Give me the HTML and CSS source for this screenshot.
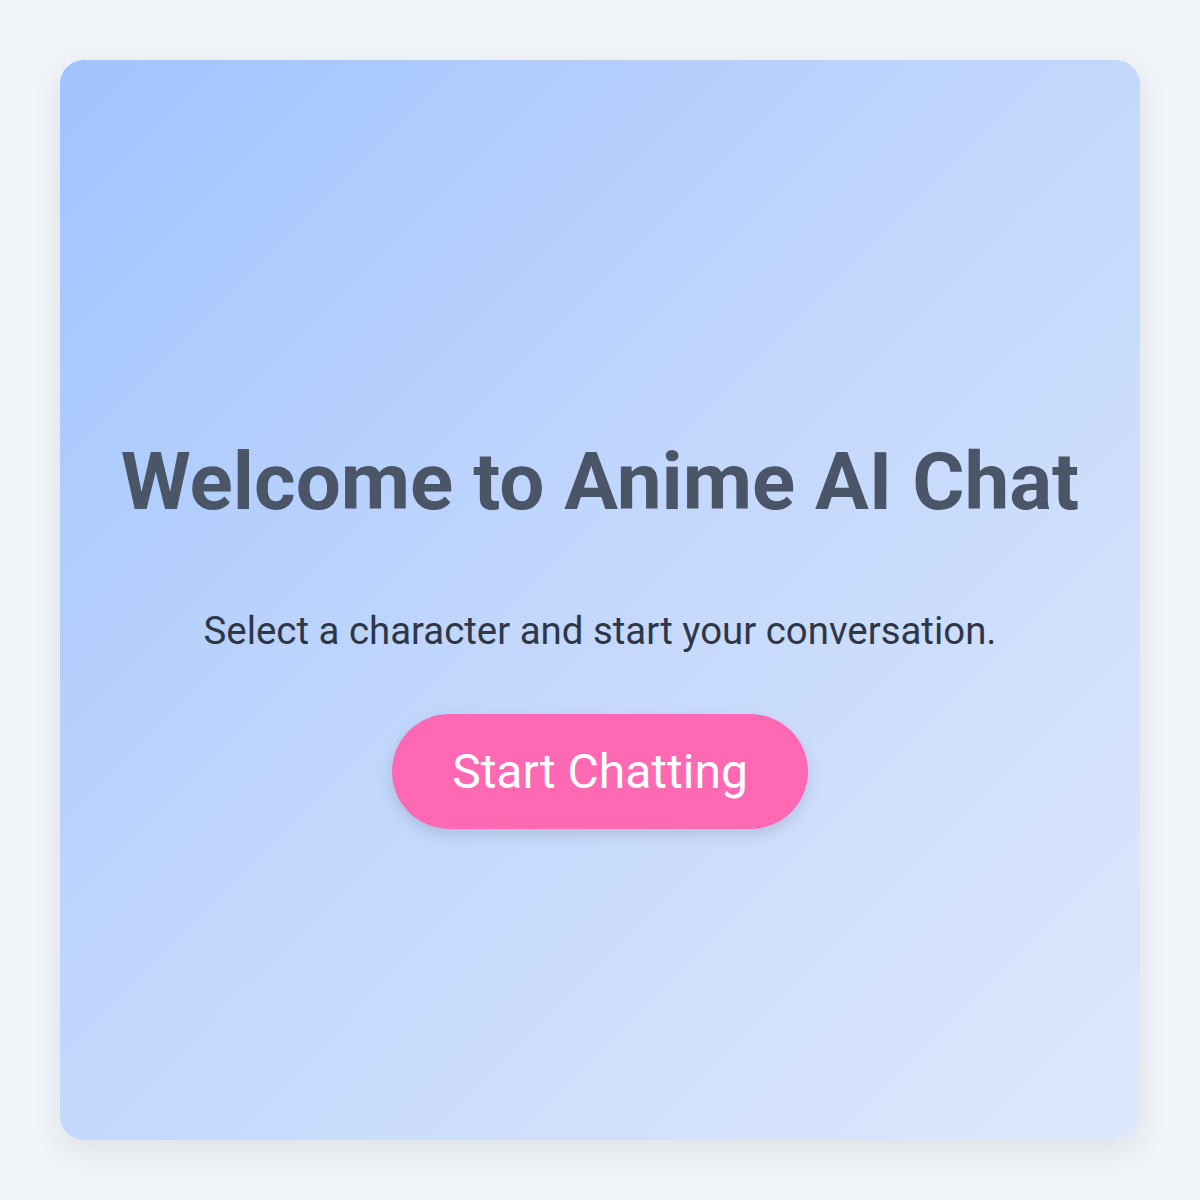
FILE: index.html
```html
<!DOCTYPE html>
<html lang="en">
<head>
<meta charset="utf-8">
<title>Anime AI Chat</title>
<link rel="stylesheet" href="styles.css">
</head>
<body>
  <main class="page">
    <section class="card">
      <h1 class="title">Welcome to Anime AI Chat</h1>
      <p class="subtitle">Select a character and start your conversation.</p>
      <button class="cta" type="button">Start Chatting</button>
    </section>
  </main>
</body>
</html>
```
FILE: styles.css
```css
html, body {
  margin: 0;
  padding: 0;
}
body {
  background: #f0f4f8;
  font-family: Roboto, "Noto Sans", sans-serif;
}
.page {
  box-sizing: border-box;
  width: 1200px;
  height: 1200px;
  padding: 60px;
}
.card {
  box-sizing: border-box;
  width: 1080px;
  height: 1080px;
  border-radius: 24px;
  background: linear-gradient(135deg, #a0c4ff 0%, #c4d8fc 50%, #dde8fc 100%);
  box-shadow: 0 10px 30px rgba(0, 0, 0, 0.08);
  display: flex;
  flex-direction: column;
  align-items: center;
  justify-content: center;
  padding-top: 63px;
  text-align: center;
}
.title {
  margin: 0 0 74px;
  font-size: 80px;
  line-height: 96px;
  font-weight: 700;
  color: #4a5568;
}
.subtitle {
  margin: 0 0 56px;
  font-size: 38.4px;
  line-height: 54px;
  color: #2d3748;
}
.cta {
  font-family: Roboto, "Noto Sans", sans-serif;
  font-size: 48px;
  line-height: 56px;
  color: #ffffff;
  background: #ff69b4;
  border: none;
  border-radius: 60px;
  height: 115px;
  padding: 0 60px;
  box-shadow: 0 6px 15px rgba(0, 0, 0, 0.12);
  cursor: pointer;
}
```
